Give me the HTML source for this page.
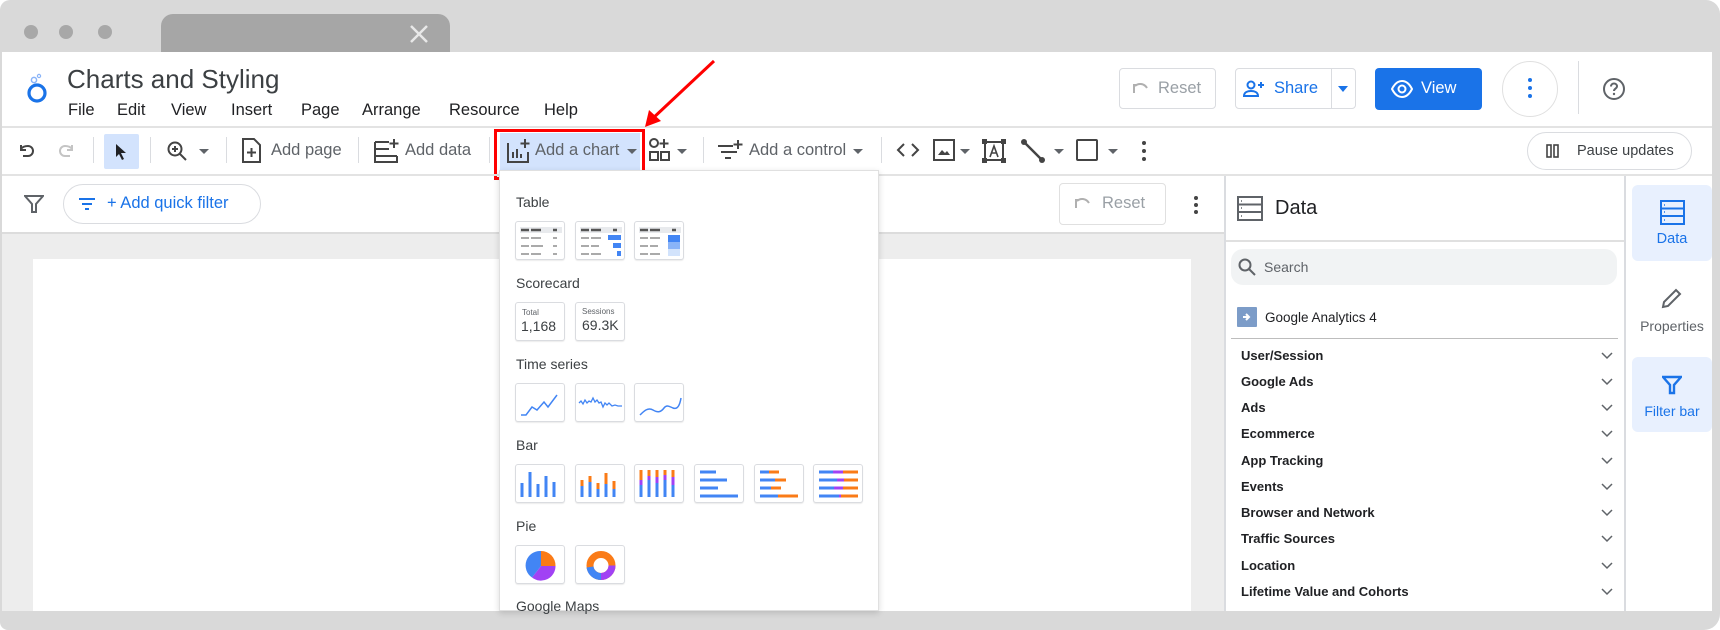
<!DOCTYPE html>
<html><head><meta charset="utf-8"><style>
*{box-sizing:border-box;margin:0;padding:0}
body{width:1720px;height:630px;overflow:hidden;background:#fff;font-family:"Liberation Sans",Arial,sans-serif;color:#3c4043;position:relative}
.a{position:absolute}
.t{position:absolute;white-space:nowrap}
.vd{position:absolute;width:1px;background:#dadce0}
.th{position:absolute;width:50px;height:39px;border:1px solid #dadce0;border-radius:3px;background:#fff;box-shadow:0 1px 1px rgba(0,0,0,.08)}
.th svg{position:absolute;left:0;top:0}
.lbl{position:absolute;left:516px;font-size:14px;color:#3c4043}
.it{position:absolute;left:1241px;font-size:13px;font-weight:bold;color:#202124}
.chev{position:absolute;left:1601px}
</style></head><body>
<!-- frame -->
<div class="a" style="left:0;top:0;width:1720px;height:52px;background:#d9d9d9;border-radius:10px 14px 0 0"></div>
<div class="a" style="left:24px;top:25px;width:14px;height:14px;border-radius:50%;background:#a8a8a8"></div>
<div class="a" style="left:59px;top:25px;width:14px;height:14px;border-radius:50%;background:#a8a8a8"></div>
<div class="a" style="left:98px;top:25px;width:14px;height:14px;border-radius:50%;background:#a8a8a8"></div>
<div class="a" style="left:161px;top:14px;width:289px;height:38px;background:#a6a6a6;border-radius:12px 12px 0 0"></div>
<svg class="a" style="left:409px;top:24px" width="20" height="20"><path d="M2 2L18 18M18 2L2 18" stroke="#e8e8e8" stroke-width="2.5"/></svg>
<div class="a" style="left:0;top:52px;width:2px;height:560px;background:#d9d9d9"></div>
<div class="a" style="left:1712px;top:52px;width:8px;height:560px;background:#d9d9d9"></div>
<div class="a" style="left:0;top:611px;width:1720px;height:19px;background:#d9d9d9;border-radius:0 0 16px 8px"></div>

<!-- header -->
<svg class="a" style="left:25px;top:72px" width="26" height="32"><circle cx="12" cy="21" r="8" fill="none" stroke="#1a73e8" stroke-width="3.2"/><circle cx="9" cy="8" r="2.6" fill="none" stroke="#8ab4f8" stroke-width="1.5"/><circle cx="14" cy="4" r="1.6" fill="none" stroke="#8ab4f8" stroke-width="1.2"/></svg>
<div class="t" style="left:67px;top:64px;font-size:26px;color:#3c4043">Charts and Styling</div>
<div class="t" style="left:68px;top:101px;font-size:16.5px;color:#202124">File</div>
<div class="t" style="left:117px;top:101px;font-size:16.5px;color:#202124">Edit</div>
<div class="t" style="left:171px;top:101px;font-size:16.5px;color:#202124">View</div>
<div class="t" style="left:231px;top:101px;font-size:16.5px;color:#202124">Insert</div>
<div class="t" style="left:301px;top:101px;font-size:16.5px;color:#202124">Page</div>
<div class="t" style="left:362px;top:101px;font-size:16.5px;color:#202124">Arrange</div>
<div class="t" style="left:449px;top:101px;font-size:16.5px;color:#202124">Resource</div>
<div class="t" style="left:544px;top:101px;font-size:16.5px;color:#202124">Help</div>

<div class="a" style="left:1119px;top:68px;width:97px;height:41px;border:1px solid #dadce0;border-radius:4px"></div>
<svg class="a" style="left:1131px;top:81px" width="20" height="16"><path d="M3 12V4h2M4 5c3-3 9-3 12 2" fill="none" stroke="#b0b0b0" stroke-width="2"/></svg>
<div class="t" style="left:1158px;top:79px;font-size:16.5px;color:#9aa0a6">Reset</div>
<div class="a" style="left:1235px;top:68px;width:121px;height:41px;border:1px solid #dadce0;border-radius:4px"></div>
<div class="a" style="left:1331px;top:69px;width:1px;height:39px;background:#dadce0"></div>
<svg class="a" style="left:1243px;top:79px" width="22" height="20"><circle cx="8" cy="6" r="3.5" fill="none" stroke="#1a73e8" stroke-width="2"/><path d="M1 17c0-4 4-5 7-5s7 1 7 5z" fill="none" stroke="#1a73e8" stroke-width="2"/><path d="M15 6h6M18 3v6" stroke="#1a73e8" stroke-width="2"/></svg>
<div class="t" style="left:1274px;top:79px;font-size:16.5px;color:#1a73e8">Share</div>
<svg class="a" style="left:1338px;top:86px" width="10" height="6"><path d="M0 0h10L5 6z" fill="#1a73e8"/></svg>
<div class="a" style="left:1375px;top:68px;width:107px;height:42px;background:#1a73e8;border-radius:4px"></div>
<svg class="a" style="left:1391px;top:80px" width="22" height="18"><path d="M1 9c3-6 7-8 10-8s7 2 10 8c-3 6-7 8-10 8S4 15 1 9z" fill="none" stroke="#fff" stroke-width="2"/><circle cx="11" cy="9" r="3.5" fill="none" stroke="#fff" stroke-width="2"/></svg>
<div class="t" style="left:1421px;top:79px;font-size:16.5px;color:#fff">View</div>
<div class="a" style="left:1502px;top:61px;width:56px;height:56px;border:1px solid #e0e0e0;border-radius:50%"></div>
<div class="a" style="left:1528px;top:78px;width:4px;height:4px;border-radius:50%;background:#1a73e8;box-shadow:0 8px 0 #1a73e8,0 16px 0 #1a73e8"></div>
<div class="a" style="left:1578px;top:61px;width:1px;height:53px;background:#dadce0"></div>
<svg class="a" style="left:1602px;top:77px" width="24" height="24"><circle cx="12" cy="12" r="10" fill="none" stroke="#5f6368" stroke-width="2"/><path d="M9 9.5c0-2 1.5-3 3-3s3 1 3 2.8c0 2.3-3 2.3-3 4.7" fill="none" stroke="#5f6368" stroke-width="2"/><circle cx="12" cy="17" r="1.2" fill="#5f6368"/></svg>

<div class="a" style="left:2px;top:126px;width:1710px;height:2px;background:#e3e3e3"></div>

<!-- toolbar -->
<svg class="a" style="left:17px;top:141px" width="20" height="20"><path d="M4 4v5h5M4 8c2-3 5-3 7-3a5 5 0 010 10H6" fill="none" stroke="#444" stroke-width="2"/></svg>
<svg class="a" style="left:56px;top:141px" width="20" height="20"><path d="M16 4v5h-5M16 8c-2-3-5-3-7-3a5 5 0 000 10h5" fill="none" stroke="#c4c4c4" stroke-width="2"/></svg>
<div class="vd" style="left:93px;top:137px;height:26px"></div>
<div class="a" style="left:104px;top:134px;width:35px;height:35px;background:#d3e3fd;border-radius:2px"></div>
<svg class="a" style="left:114px;top:143px" width="14" height="18"><path d="M2 1l10 9H7l3 6-2 1-3-6-3 3z" fill="#202124"/></svg>
<div class="vd" style="left:150px;top:137px;height:26px"></div>
<svg class="a" style="left:166px;top:140px" width="24" height="24"><circle cx="9" cy="9" r="6.5" fill="none" stroke="#444" stroke-width="2"/><path d="M14 14l6 6M9 6v6M6 9h6" stroke="#444" stroke-width="2"/></svg>
<svg class="a" style="left:199px;top:149px" width="10" height="6"><path d="M0 0h10L5 5z" fill="#5f6368"/></svg>
<div class="vd" style="left:226px;top:137px;height:26px"></div>
<svg class="a" style="left:241px;top:138px" width="22" height="26"><path d="M2 1h11l6 6v17H2z" fill="none" stroke="#444" stroke-width="2"/><path d="M10.5 10v9M6 14.5h9" stroke="#444" stroke-width="2"/></svg>
<div class="t" style="left:271px;top:141px;font-size:16.5px;color:#5f6368">Add page</div>
<div class="vd" style="left:358px;top:137px;height:26px"></div>
<svg class="a" style="left:373px;top:138px" width="26" height="26"><path d="M2 4h14M2 4v20h22v-6M2 11h14M2 18h22" fill="none" stroke="#444" stroke-width="2"/><path d="M21 1v9M16.5 5.5h9" stroke="#444" stroke-width="2"/></svg>
<div class="t" style="left:405px;top:141px;font-size:16.5px;color:#5f6368">Add data</div>
<div class="vd" style="left:489px;top:137px;height:26px"></div>
<div class="a" style="left:500px;top:133px;width:140px;height:37px;background:#d3e3fd"></div>
<svg class="a" style="left:506px;top:138px" width="26" height="26"><path d="M2 5v19h20V14" fill="none" stroke="#444" stroke-width="2"/><path d="M7 20v-6M11 20v-9M15 20v-4M19 1v9M14.5 5.5h9" stroke="#444" stroke-width="2"/></svg>
<div class="t" style="left:535px;top:141px;font-size:16.5px;color:#5f6368">Add a chart</div>
<svg class="a" style="left:627px;top:149px" width="10" height="6"><path d="M0 0h10L5 5z" fill="#5f6368"/></svg>
<div class="a" style="left:494px;top:129px;width:151px;height:51px;border:3px solid #f00"></div>
<svg class="a" style="left:648px;top:137px" width="28" height="28"><circle cx="6" cy="6" r="4" fill="none" stroke="#444" stroke-width="2"/><path d="M16 2v9M11.5 6.5h9" stroke="#444" stroke-width="2"/><rect x="2" y="15" width="8" height="8" fill="none" stroke="#444" stroke-width="2"/><rect x="13" y="15" width="8" height="8" fill="none" stroke="#444" stroke-width="2"/></svg>
<svg class="a" style="left:677px;top:149px" width="10" height="6"><path d="M0 0h10L5 5z" fill="#5f6368"/></svg>
<div class="vd" style="left:703px;top:137px;height:26px"></div>
<svg class="a" style="left:717px;top:139px" width="26" height="24"><path d="M1 7h15M4 13h16M8 19h6M21 1v9M16.5 5.5h9" stroke="#444" stroke-width="2"/></svg>
<div class="t" style="left:749px;top:141px;font-size:16.5px;color:#5f6368">Add a control</div>
<svg class="a" style="left:853px;top:149px" width="10" height="6"><path d="M0 0h10L5 5z" fill="#5f6368"/></svg>
<div class="vd" style="left:881px;top:137px;height:26px"></div>
<svg class="a" style="left:896px;top:142px" width="24" height="16"><path d="M8 2L2 8l6 6M16 2l6 6-6 6" fill="none" stroke="#444" stroke-width="2"/></svg>
<svg class="a" style="left:933px;top:139px" width="22" height="22"><rect x="1" y="1" width="20" height="20" fill="none" stroke="#444" stroke-width="2"/><path d="M5 16l4-5 3 3 2-2 3 4z" fill="#444"/></svg>
<svg class="a" style="left:960px;top:149px" width="10" height="6"><path d="M0 0h10L5 5z" fill="#5f6368"/></svg>
<svg class="a" style="left:982px;top:139px" width="24" height="24"><rect x="3" y="3" width="18" height="18" fill="none" stroke="#444" stroke-width="2"/><rect x="0" y="0" width="5" height="5" fill="#444"/><rect x="19" y="0" width="5" height="5" fill="#444"/><rect x="0" y="19" width="5" height="5" fill="#444"/><rect x="19" y="19" width="5" height="5" fill="#444"/><path d="M8 18l4-11 4 11M9.5 14h5" fill="none" stroke="#444" stroke-width="1.6"/></svg>
<svg class="a" style="left:1020px;top:138px" width="26" height="26"><path d="M4 4l18 18" stroke="#444" stroke-width="2.5"/><circle cx="4" cy="4" r="3" fill="#444"/><circle cx="22" cy="22" r="3" fill="#444"/></svg>
<svg class="a" style="left:1054px;top:149px" width="10" height="6"><path d="M0 0h10L5 5z" fill="#5f6368"/></svg>
<svg class="a" style="left:1076px;top:139px" width="22" height="22"><rect x="1" y="1" width="20" height="20" rx="1" fill="none" stroke="#444" stroke-width="2"/></svg>
<svg class="a" style="left:1108px;top:149px" width="10" height="6"><path d="M0 0h10L5 5z" fill="#5f6368"/></svg>
<div class="a" style="left:1142px;top:141px;width:4px;height:4px;border-radius:50%;background:#444;box-shadow:0 8px 0 #444,0 16px 0 #444"></div>
<div class="a" style="left:1527px;top:132px;width:165px;height:38px;border:1px solid #dadce0;border-radius:19px"></div>
<svg class="a" style="left:1546px;top:144px" width="14" height="14"><rect x="1" y="1" width="4" height="12" fill="none" stroke="#444" stroke-width="1.6"/><rect x="8" y="1" width="4" height="12" fill="none" stroke="#444" stroke-width="1.6"/></svg>
<div class="t" style="left:1577px;top:143px;font-size:14.5px;color:#3c4043">Pause updates</div>

<div class="a" style="left:2px;top:174px;width:1710px;height:2px;background:#e3e3e3"></div>

<!-- filter row -->
<svg class="a" style="left:24px;top:194px" width="20" height="20"><path d="M1 2h18l-7 8v8h-4v-8z" fill="none" stroke="#5f6368" stroke-width="2"/></svg>
<div class="a" style="left:63px;top:184px;width:198px;height:40px;border:1px solid #dadce0;border-radius:20px"></div>
<svg class="a" style="left:78px;top:197px" width="18" height="14"><path d="M1 2h16M4 7h10M7 12h4" stroke="#1a73e8" stroke-width="2"/></svg>
<div class="t" style="left:107px;top:194px;font-size:16.5px;color:#1a73e8">+ Add quick filter</div>
<div class="a" style="left:1059px;top:183px;width:107px;height:42px;border:1px solid #e0e0e0;border-radius:4px"></div>
<svg class="a" style="left:1073px;top:196px" width="20" height="16"><path d="M3 12V4h2M4 5c3-3 9-3 12 2" fill="none" stroke="#b0b0b0" stroke-width="2"/></svg>
<div class="t" style="left:1102px;top:194px;font-size:16.5px;color:#9aa0a6">Reset</div>
<div class="a" style="left:1194px;top:196px;width:4px;height:4px;border-radius:50%;background:#444;box-shadow:0 7px 0 #444,0 14px 0 #444"></div>

<!-- canvas -->
<div class="a" style="left:2px;top:232px;width:1222px;height:2px;background:#dcdcdc"></div>
<div class="a" style="left:2px;top:234px;width:1222px;height:377px;background:#ededed"></div>
<div class="a" style="left:33px;top:259px;width:1158px;height:352px;background:#fff"></div>

<!-- dropdown -->
<div class="a" style="left:499px;top:170px;width:380px;height:441px;background:#fff;border:1px solid #e0e0e0;box-shadow:0 2px 6px rgba(0,0,0,.15)"></div>
<div class="lbl" style="top:194px">Table</div>
<div class="th" style="left:515px;top:221px"><svg width="50" height="39"><rect x="4" y="5" width="42" height="6" fill="#e8eaed"/><path d="M5 8h8M15 8h10M37 8h4" stroke="#555" stroke-width="2.5"/><path d="M5 16h8M15 16h10M37 16h4M5 24h8M15 24h12M37 24h4M5 32h8M15 32h10M37 32h4" stroke="#aaa" stroke-width="2"/></svg></div>
<div class="th" style="left:575px;top:221px"><svg width="50" height="39"><rect x="4" y="5" width="42" height="6" fill="#e8eaed"/><path d="M5 8h8M15 8h10M37 8h4" stroke="#555" stroke-width="2.5"/><path d="M5 16h8M15 16h10M5 24h8M15 24h8M5 32h8M15 32h10" stroke="#aaa" stroke-width="2"/><rect x="32" y="13" width="13" height="5" fill="#4285f4"/><rect x="37" y="21" width="8" height="5" fill="#4285f4"/><rect x="41" y="29" width="4" height="5" fill="#4285f4"/></svg></div>
<div class="th" style="left:634px;top:221px"><svg width="50" height="39"><rect x="4" y="5" width="42" height="6" fill="#e8eaed"/><path d="M5 8h8M15 8h10M37 8h4" stroke="#555" stroke-width="2.5"/><path d="M5 16h8M15 16h10M5 24h8M15 24h8M5 32h8M15 32h10" stroke="#aaa" stroke-width="2"/><rect x="33" y="13" width="12" height="7" fill="#4285f4"/><rect x="33" y="20" width="12" height="7" fill="#8ab4f8"/><rect x="33" y="27" width="12" height="7" fill="#d2e3fc"/></svg></div>
<div class="lbl" style="top:275px">Scorecard</div>
<div class="th" style="left:515px;top:302px"><div class="t" style="left:6px;top:5px;font-size:8px;color:#5f6368">Total</div><div class="t" style="left:5px;top:15px;font-size:14px;color:#3c4043">1,168</div></div>
<div class="th" style="left:575px;top:302px"><div class="t" style="left:6px;top:4px;font-size:8px;color:#5f6368">Sessions</div><div class="t" style="left:6px;top:14px;font-size:14px;color:#3c4043">69.3K</div></div>
<div class="lbl" style="top:356px">Time series</div>
<div class="th" style="left:515px;top:383px"><svg width="50" height="39"><path d="M5 31h5l6-8 5 3 7-8 4 5 9-12" fill="none" stroke="#4285f4" stroke-width="1.5"/></svg></div>
<div class="th" style="left:575px;top:383px"><svg width="50" height="39"><path d="M3 19l2-2 2 3 2-4 2 3 2-2 2 1 2-4 2 4 2-2 2 3 2-1 2 5 2-4 2 2 2-2 3 3 3-1 3 1 4 0" fill="none" stroke="#4285f4" stroke-width="1.3"/></svg></div>
<div class="th" style="left:634px;top:383px"><svg width="50" height="39"><path d="M5 31c4-4 8-8 13-5s8 2 11-2 6-1 9 0c5 2 7-4 8-10" fill="none" stroke="#4285f4" stroke-width="1.5"/></svg></div>
<div class="lbl" style="top:437px">Bar</div>
<div class="th" style="left:515px;top:464px"><svg width="50" height="39"><path d="M6 32V18M14 32V7M22 32V19M30 32V11M38 32V17" stroke="#4285f4" stroke-width="3"/></svg></div>
<div class="th" style="left:575px;top:464px"><svg width="50" height="39"><path d="M6 32V21M14 32V17M22 32V24M30 32V19M38 32V24" stroke="#4285f4" stroke-width="3"/><path d="M6 21V15M14 17V11M22 24V18M30 19V8M38 24V16" stroke="#fa7b17" stroke-width="3"/></svg></div>
<div class="th" style="left:634px;top:464px"><svg width="50" height="39"><path d="M6 32V20M14 32V15M22 32V18M30 32V15M38 32V20" stroke="#4285f4" stroke-width="3"/><path d="M6 20V15M14 15V11M22 18V12M30 15V10M38 20V12" stroke="#a142f4" stroke-width="3"/><path d="M6 15V5M14 11V5M22 12V5M30 10V5M38 12V5" stroke="#fa7b17" stroke-width="3"/></svg></div>
<div class="th" style="left:694px;top:464px"><svg width="50" height="39"><path d="M5 7h16M5 15h27M5 23h18M5 31h38" stroke="#4285f4" stroke-width="3"/></svg></div>
<div class="th" style="left:754px;top:464px"><svg width="50" height="39"><path d="M5 7h9M5 15h15M5 23h11M5 31h18" stroke="#4285f4" stroke-width="3"/><path d="M14 7h10M20 15h11M16 23h10M23 31h20" stroke="#fa7b17" stroke-width="3"/></svg></div>
<div class="th" style="left:813px;top:464px"><svg width="50" height="39"><path d="M5 7h14M5 15h18M5 23h15M5 31h20" stroke="#4285f4" stroke-width="3"/><path d="M19 7h10M23 15h7M20 23h9M25 31h2" stroke="#a142f4" stroke-width="3"/><path d="M29 7h15M30 15h14M29 23h15M27 31h17" stroke="#fa7b17" stroke-width="3"/></svg></div>
<div class="lbl" style="top:518px">Pie</div>
<div class="th" style="left:515px;top:545px"><svg width="50" height="39"><path d="M25 20L25 5A14.5 14.5 0 0 1 39.5 20z" fill="#fa7b17"/><path d="M25 20h14.5A14.5 14.5 0 0 1 16 31.5z" fill="#a142f4"/><path d="M25 20L16 31.5A14.5 14.5 0 0 1 25 5z" fill="#4285f4"/></svg></div>
<div class="th" style="left:575px;top:545px"><svg width="50" height="39"><circle cx="25" cy="19.5" r="11" fill="none" stroke="#fa7b17" stroke-width="7"/><path d="M36 19.5A11 11 0 0 1 25 30.5" fill="none" stroke="#a142f4" stroke-width="7"/><path d="M25 30.5A11 11 0 0 1 14 21" fill="none" stroke="#4285f4" stroke-width="7"/></svg></div>
<div class="lbl" style="top:598px">Google Maps</div>

<!-- red arrow -->
<svg class="a" style="left:630px;top:55px" width="100" height="85"><path d="M84 6L21 65" stroke="#f00" stroke-width="3"/><path d="M15 72l4-17 12 11z" fill="#f00"/></svg>

<!-- data panel -->
<div class="a" style="left:1224px;top:176px;width:2px;height:435px;background:#dadce0"></div>
<div class="a" style="left:1624px;top:176px;width:2px;height:435px;background:#dadce0"></div>
<svg class="a" style="left:1237px;top:196px" width="26" height="25"><rect x="1" y="1" width="24" height="23" fill="none" stroke="#5f6368" stroke-width="2"/><path d="M1 8.5h24M1 16h24" stroke="#5f6368" stroke-width="2"/><path d="M4 5h1M4 12h1M4 20h1" stroke="#5f6368" stroke-width="1.5"/></svg>
<div class="t" style="left:1275px;top:197px;font-size:20px;color:#202124">Data</div>
<div class="a" style="left:1226px;top:240px;width:398px;height:2px;background:#e0e0e0"></div>
<div class="a" style="left:1231px;top:249px;width:386px;height:36px;background:#f1f3f4;border-radius:12px"></div>
<svg class="a" style="left:1238px;top:258px" width="18" height="18"><circle cx="7" cy="7" r="5.5" fill="none" stroke="#5f6368" stroke-width="2"/><path d="M11 11l6 6" stroke="#5f6368" stroke-width="2"/></svg>
<div class="t" style="left:1264px;top:259px;font-size:14px;color:#5f6368">Search</div>
<div class="a" style="left:1237px;top:307px;width:20px;height:20px;background:#7c9cc8;border-radius:1px"></div>
<svg class="a" style="left:1242px;top:312px" width="10" height="10"><path d="M1 5h5M4 2l3 3-3 3" stroke="#fff" stroke-width="2" fill="none"/></svg>
<div class="t" style="left:1265px;top:310px;font-size:13.5px;color:#202124">Google Analytics 4</div>
<div class="a" style="left:1231px;top:338px;width:387px;height:1px;background:#bdbdbd"></div>
<div class="it" style="top:348px">User/Session</div>
<div class="it" style="top:374px">Google Ads</div>
<div class="it" style="top:400px">Ads</div>
<div class="it" style="top:426px">Ecommerce</div>
<div class="it" style="top:453px">App Tracking</div>
<div class="it" style="top:479px">Events</div>
<div class="it" style="top:505px">Browser and Network</div>
<div class="it" style="top:531px">Traffic Sources</div>
<div class="it" style="top:558px">Location</div>
<div class="it" style="top:584px">Lifetime Value and Cohorts</div>
<svg class="chev" style="top:352px" width="12" height="8"><path d="M1 1l5 5 5-5" fill="none" stroke="#5f6368" stroke-width="1.5"/></svg>
<svg class="chev" style="top:378px" width="12" height="8"><path d="M1 1l5 5 5-5" fill="none" stroke="#5f6368" stroke-width="1.5"/></svg>
<svg class="chev" style="top:404px" width="12" height="8"><path d="M1 1l5 5 5-5" fill="none" stroke="#5f6368" stroke-width="1.5"/></svg>
<svg class="chev" style="top:430px" width="12" height="8"><path d="M1 1l5 5 5-5" fill="none" stroke="#5f6368" stroke-width="1.5"/></svg>
<svg class="chev" style="top:457px" width="12" height="8"><path d="M1 1l5 5 5-5" fill="none" stroke="#5f6368" stroke-width="1.5"/></svg>
<svg class="chev" style="top:483px" width="12" height="8"><path d="M1 1l5 5 5-5" fill="none" stroke="#5f6368" stroke-width="1.5"/></svg>
<svg class="chev" style="top:509px" width="12" height="8"><path d="M1 1l5 5 5-5" fill="none" stroke="#5f6368" stroke-width="1.5"/></svg>
<svg class="chev" style="top:535px" width="12" height="8"><path d="M1 1l5 5 5-5" fill="none" stroke="#5f6368" stroke-width="1.5"/></svg>
<svg class="chev" style="top:562px" width="12" height="8"><path d="M1 1l5 5 5-5" fill="none" stroke="#5f6368" stroke-width="1.5"/></svg>
<svg class="chev" style="top:588px" width="12" height="8"><path d="M1 1l5 5 5-5" fill="none" stroke="#5f6368" stroke-width="1.5"/></svg>

<!-- right rail -->
<div class="a" style="left:1632px;top:185px;width:80px;height:76px;background:#e8f0fe;border-radius:6px"></div>
<svg class="a" style="left:1660px;top:200px" width="25" height="25"><rect x="1" y="1" width="23" height="23" fill="none" stroke="#1a73e8" stroke-width="2"/><path d="M1 8.5h23M1 16h23" stroke="#1a73e8" stroke-width="2"/><path d="M4 5h1M4 12h1M4 20h1" stroke="#1a73e8" stroke-width="1.5"/></svg>
<div class="t" style="left:1640px;top:231px;width:64px;text-align:center;font-size:14.5px;color:#1a73e8">Data</div>
<svg class="a" style="left:1661px;top:287px" width="22" height="22"><path d="M2 20l1-5L15 3l4 4L7 19z" fill="none" stroke="#5f6368" stroke-width="2"/></svg>
<div class="t" style="left:1632px;top:318px;width:80px;text-align:center;font-size:14px;color:#5f6368">Properties</div>
<div class="a" style="left:1632px;top:357px;width:80px;height:75px;background:#e8f0fe;border-radius:6px"></div>
<svg class="a" style="left:1662px;top:375px" width="20" height="20"><path d="M1 2h18l-7 8v8h-4v-8z" fill="none" stroke="#1a73e8" stroke-width="2.4"/></svg>
<div class="t" style="left:1632px;top:403px;width:80px;text-align:center;font-size:14px;color:#1a73e8">Filter bar</div>
</body></html>
